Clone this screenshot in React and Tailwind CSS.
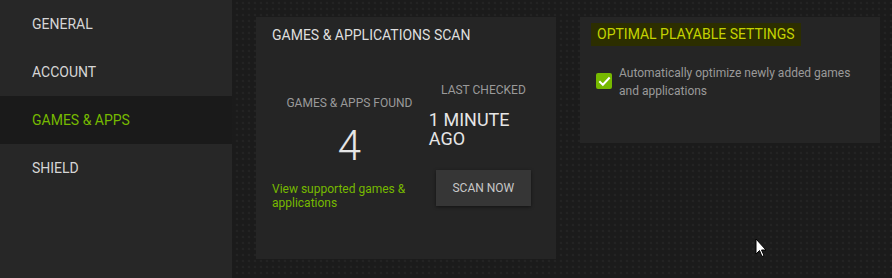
import React from 'react';

const navItems = ['GENERAL', 'ACCOUNT', 'GAMES & APPS', 'SHIELD'];

const App = () => {
  const active = 'GAMES & APPS';

  return (
    <div
      className="relative flex w-[892px] h-[278px] overflow-hidden bg-[#1b1b1b] bg-[radial-gradient(circle,#232323_1.2px,transparent_1.6px)] bg-[length:6px_6px]"
      style={{ fontFamily: 'Roboto, "Liberation Sans", sans-serif' }}
    >
      {/* Sidebar */}
      <div className="w-[232px] h-full shrink-0 bg-[#272727]">
        {navItems.map(item => (
          <div
            key={item}
            className={`h-12 flex items-center pl-8 text-[14px] ${
              item === active ? 'bg-[#1a1a1a] text-[#76b900]' : 'text-[#d6d6d6]'
            }`}
          >
            {item}
          </div>
        ))}
      </div>

      {/* Content */}
      <div className="flex items-start gap-6 pl-6 pt-[17px]">
        {/* Scan card */}
        <div className="w-[300px] h-[242px] bg-[#252525] px-4 pt-[10px]">
          <h2 className="text-[14px] leading-4 text-[#dedede]">GAMES &amp; APPLICATIONS SCAN</h2>
          <div className="flex">
            <div className="w-[156px] flex flex-col">
              <div className="mt-[52px] text-center text-[12px] leading-4 text-[#9a9a9a]">GAMES &amp; APPS FOUND</div>
              <div className="mt-[14px] text-center text-[42px] leading-[42px] font-light text-[#e6e6e6]">4</div>
              <a className="mt-[15px] text-[12px] leading-[14px] text-[#76b900] cursor-pointer">
                View supported games &amp;<br />applications
              </a>
            </div>
            <div className="w-[114px] flex flex-col">
              <div className="mt-[39px] text-center text-[12px] leading-4 text-[#9a9a9a]">LAST CHECKED</div>
              <div className="mt-[12px] pl-[2px] text-[18px] leading-[19px] text-[#e6e6e6]">
                1 MINUTE<br />AGO
              </div>
              <button className="mt-[22px] ml-[9px] w-[95px] h-9 bg-[#363636] text-[12px] text-[#c8c8c8] shadow-[0_1px_3px_rgba(0,0,0,0.5)]">
                SCAN NOW
              </button>
            </div>
          </div>
        </div>

        {/* Optimal settings card */}
        <div className="w-[300px] h-[126px] bg-[#252525] pl-[11px] pt-[5px]">
          <div className="inline-flex h-[23px] items-center px-[6px] bg-[#2c2e00] text-[14px] text-[#c4d300]">
            OPTIMAL PLAYABLE SETTINGS
          </div>
          <div className="flex items-start mt-[18px] pl-[5px]">
            <div className="mt-[9px] w-4 h-4 shrink-0 rounded-[2px] bg-[#76b900] flex items-center justify-center">
              <svg viewBox="0 0 16 16" className="w-[13px] h-[13px]" fill="none" stroke="white" strokeWidth="2.4" strokeLinecap="square">
                <path d="M2.5 8.5l3.5 3.5 7.5-8" />
              </svg>
            </div>
            <p className="ml-[7px] text-[12px] leading-[18px] text-[#9a9a9a]">
              Automatically optimize newly added games<br />and applications
            </p>
          </div>
        </div>
      </div>

      {/* Mouse cursor */}
      <svg className="absolute left-[755px] top-[238px]" width="13" height="20" viewBox="0 0 13 20">
        <path d="M1 1v15l3.5-3.5 2.5 6 2-1-2.5-5.5H11z" fill="white" stroke="black" strokeWidth="1" />
      </svg>
    </div>
  );
};

export default App;
